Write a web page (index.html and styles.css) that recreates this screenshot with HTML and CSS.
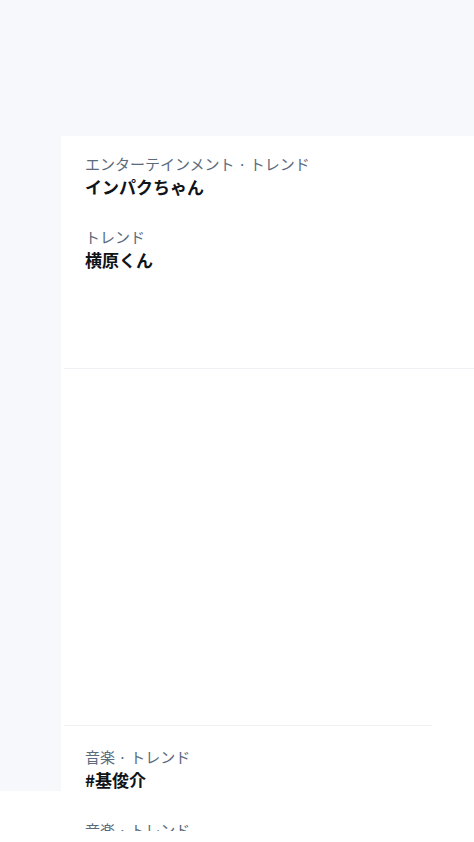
FILE: index.html
```html
<!DOCTYPE html>
<html lang="ja">
<head>
<meta charset="utf-8">
<title>トレンド</title>
<link rel="stylesheet" href="styles.css">
</head>
<body>
<div class="top"></div>
<div class="main">
  <aside class="side"></aside>
  <main class="panel">
    <section class="group first">
      <div class="row">
        <div class="label">エンターテインメント · トレンド</div>
        <div class="title">インパクちゃん</div>
      </div>
      <div class="row">
        <div class="label">トレンド</div>
        <div class="title">横原くん</div>
      </div>
    </section>
    <div class="divider full"></div>
    <div class="blank"></div>
    <div class="divider short"></div>
    <section class="group last">
      <div class="row">
        <div class="label">音楽 · トレンド</div>
        <div class="title">#基俊介</div>
      </div>
      <div class="row">
        <div class="label">音楽 · トレンド</div>
        <div class="title">&nbsp;</div>
      </div>
    </section>
  </main>
</div>
</body>
</html>
```

FILE: styles.css
```css
html, body {
  margin: 0;
  padding: 0;
}
body {
  background: #ffffff;
  font-family: "Noto Sans CJK JP", "Noto Sans", sans-serif;
  width: 474px;
  height: 842px;
  overflow: hidden;
}
.top {
  height: 136px;
  background: #f7f8fc;
}
.main {
  display: flex;
  align-items: flex-start;
}
.side {
  width: 61px;
  height: 655px;
  background: #f7f8fc;
  flex: none;
}
.panel {
  flex: 1;
  background: #ffffff;
  display: flex;
  flex-direction: column;
}
.group.first {
  height: 232px;
  box-sizing: border-box;
  padding-top: 4px;
}
.group.last {
  height: 105px;
  box-sizing: border-box;
  padding-top: 7px;
  overflow: hidden;
}
.row {
  padding: 13px 0 14px 24px;
}
.label {
  font-size: 15px;
  line-height: 22px;
  color: #5b6b7e;
  white-space: nowrap;
}
.title {
  font-size: 17px;
  line-height: 24px;
  font-weight: 700;
  color: #0f1419;
  white-space: nowrap;
}
.divider {
  height: 1px;
  background: #eef0f4;
  margin-left: 3px;
}
.divider.short {
  width: 368px;
}
.blank {
  height: 356px;
}
```
